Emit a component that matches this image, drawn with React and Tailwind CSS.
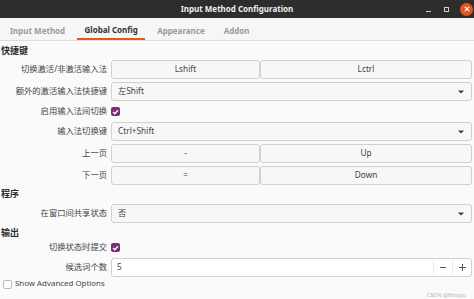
import React from "react";

const FONT = "font-['Noto_Sans','Noto_Sans_CJK_SC',sans-serif]";

function Label({ children }) {
  return (
    <div className="w-[107px] shrink-0 text-right text-[8.3px] leading-none text-[#444444] whitespace-nowrap">
      {children}
    </div>
  );
}

function Row({ label, children, h = "h-[19px]", mt = "mt-[3px]" }) {
  return (
    <div className={`flex items-center ${h} ${mt} pr-[2px]`}>
      <Label>{label}</Label>
      <div className="ml-[4px] flex-1 flex h-full items-center">{children}</div>
    </div>
  );
}

function Btn({ children, className = "" }) {
  return (
    <div
      className={`h-[19px] flex items-center justify-center border border-[#d3cfcb] rounded-[3px] bg-[#f7f7f7] text-[8.3px] text-[#444444] ${className}`}
    >
      {children}
    </div>
  );
}

function Select({ value }) {
  return (
    <div className="h-[19px] flex-1 flex items-center justify-between border border-[#d3cfcb] rounded-[3px] bg-[#f7f7f7] pl-[6px] pr-[7px] text-[8.3px] text-[#444444]">
      <span>{value}</span>
      <svg width="6" height="4" viewBox="0 0 6 4">
        <path d="M0 0.5 L6 0.5 L3 3.5 Z" fill="#3c3c3c" />
      </svg>
    </div>
  );
}

function Check() {
  return (
    <div className="w-[9px] h-[9px] rounded-[2px] bg-[#772f77] flex items-center justify-center">
      <svg width="7" height="6" viewBox="0 0 7 6">
        <path d="M1 3 L2.8 4.8 L6 1.2" stroke="white" strokeWidth="1.3" fill="none" />
      </svg>
    </div>
  );
}

function Header({ children, className = "" }) {
  return (
    <div className={`h-[14px] flex items-center pl-[1px] text-[9px] font-bold text-[#2e2e2e] ${className}`}>
      {children}
    </div>
  );
}

export default function App() {
  return (
    <div className={`w-[474px] h-[299px] overflow-hidden bg-[#fafafa] flex flex-col relative ${FONT}`}>
      {/* title bar */}
      <div className="h-[18px] shrink-0 bg-[#2d2d2d] flex items-center relative">
        <div className="flex-1 text-center text-[8px] font-bold text-[#eeeeee] leading-none">
          Input Method Configuration
        </div>
        <div className="absolute right-[1px] top-0 h-[18px] flex items-center">
          <div className="w-[5px] h-[1px] bg-[#cfcfcf] mt-[4px] mr-[13px]" />
          <div className="w-[5px] h-[5px] border border-[#cfcfcf] mr-[11px]" />
          <div className="w-[13px] h-[13px] rounded-full bg-[#e95420] flex items-center justify-center">
            <svg width="6" height="6" viewBox="0 0 6 6">
              <path d="M0.8 0.8 L5.2 5.2 M5.2 0.8 L0.8 5.2" stroke="white" strokeWidth="1.2" />
            </svg>
          </div>
        </div>
      </div>

      {/* tabs */}
      <div className="h-[23px] shrink-0 bg-[#f6f6f6] border-b border-[#dcdcdc] flex items-stretch text-[8px] font-bold">
        <div className="ml-[5px] px-[5px] pt-[3px] flex items-center text-[#9a9a9a]">Input Method</div>
        <div className="ml-[7px] w-[68px] pt-[3px] flex items-center justify-center text-[#333] border-b-2 border-[#e95420]">
          Global Config
        </div>
        <div className="ml-[7px] px-[5px] pt-[3px] flex items-center text-[#9a9a9a]">Appearance</div>
        <div className="ml-[9px] px-[5px] pt-[3px] flex items-center text-[#9a9a9a]">Addon</div>
      </div>

      <Header className="mt-[3px]">快捷键</Header>
      <Row label="切换激活/非激活输入法" mt="mt-[2px]">
        <Btn className="w-[149px]">Lshift</Btn>
        <Btn className="flex-1">Lctrl</Btn>
      </Row>
      <Row label="额外的激活输入法快捷键">
        <Select value="左Shift" />
      </Row>
      <Row label="启用输入法间切换" h="h-[15px]">
        <Check />
      </Row>
      <Row label="输入法切换键">
        <Select value="Ctrl+Shift" />
      </Row>
      <Row label="上一页">
        <Btn className="w-[149px]">-</Btn>
        <Btn className="flex-1">Up</Btn>
      </Row>
      <Row label="下一页">
        <Btn className="w-[149px]">=</Btn>
        <Btn className="flex-1">Down</Btn>
      </Row>

      <Header className="mt-[2px]">程序</Header>
      <Row label="在窗口间共享状态">
        <Select value="否" />
      </Row>

      <Header className="mt-[3px]">输出</Header>
      <Row label="切换状态时提交" h="h-[15px]" mt="mt-0">
        <Check />
      </Row>
      <Row label="候选词个数">
        <div className="h-[19px] flex-1 flex items-center border border-[#d3cfcb] rounded-[3px] bg-white text-[8.3px] text-[#444444]">
          <span className="flex-1 pl-[5px]">5</span>
          <div className="w-[19px] h-full border-l border-[#ececec] flex items-center justify-center">
            <div className="w-[6px] h-[1px] bg-[#555]" />
          </div>
          <div className="w-[19px] h-full border-l border-[#ececec] flex items-center justify-center relative">
            <div className="w-[7px] h-[1px] bg-[#555]" />
            <div className="absolute w-[1px] h-[7px] bg-[#555]" />
          </div>
        </div>
      </Row>

      <div className="h-[14px] flex items-center pl-[3px] text-[7.9px] text-[#444444]">
        <div className="w-[9px] h-[9px] border border-[#bdb8b3] rounded-[2px] bg-white mr-[3px]" />
        Show Advanced Options
      </div>

      <div className="absolute right-[8px] bottom-[1px] text-[5.5px] text-[#b5b5b5] leading-none">
        CSDN @fitnoyu
      </div>
    </div>
  );
}
